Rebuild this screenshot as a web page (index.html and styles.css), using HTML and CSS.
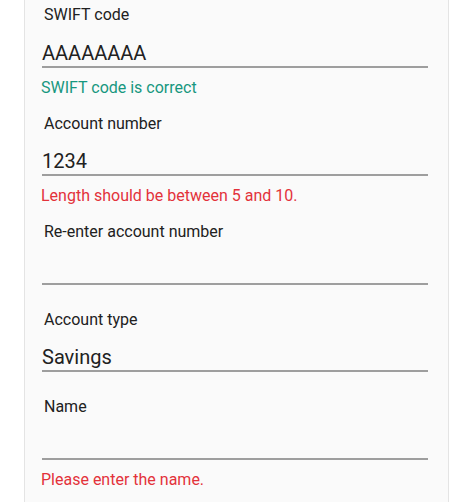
FILE: index.html
```html
<!DOCTYPE html>
<html lang="en">
<head>
<meta charset="utf-8">
<title>Bank details form</title>
<link rel="stylesheet" href="styles.css">
</head>
<body>
<div class="page">
  <form class="card">
    <div class="field field--helper">
      <div class="label">SWIFT code</div>
      <div class="value">AAAAAAAA</div>
      <div class="line"></div>
      <div class="helper helper--ok">SWIFT code is correct</div>
    </div>
    <div class="field field--helper">
      <div class="label">Account number</div>
      <div class="value">1234</div>
      <div class="line"></div>
      <div class="helper helper--error">Length should be between 5 and 10.</div>
    </div>
    <div class="field">
      <div class="label">Re-enter account number</div>
      <div class="value"></div>
      <div class="line"></div>
    </div>
    <div class="field">
      <div class="label">Account type</div>
      <div class="value">Savings</div>
      <div class="line"></div>
    </div>
    <div class="field field--helper">
      <div class="label">Name</div>
      <div class="value"></div>
      <div class="line"></div>
      <div class="helper helper--error">Please enter the name.</div>
    </div>
  </form>
</div>
</body>
</html>
```
FILE: styles.css
```css
html, body {
  margin: 0;
  padding: 0;
  background: #ffffff;
  height: 100%;
  overflow: hidden;
}

.page {
  display: flex;
  padding-left: 24px;
  height: 100%;
}

.card {
  width: 425px;
  box-sizing: border-box;
  background: #fafafa;
  border-left: 1px solid #e4e4e4;
  border-right: 1px solid #e4e4e4;
  padding: 5px 20px 0 17px;
  font-family: Roboto, "Liberation Sans", sans-serif;
  color: #212121;
  display: flex;
  flex-direction: column;
}

.field {
  display: flex;
  flex-direction: column;
  margin-bottom: 25px;
}

.field--helper {
  margin-bottom: 16px;
}

.label {
  font-size: 16px;
  line-height: 20px;
  height: 20px;
  padding-left: 2px;
  margin-bottom: 14.5px;
}

.value {
  font-size: 20px;
  line-height: 26px;
  height: 26px;
}

.line {
  height: 2px;
  background: #9e9e9e;
}

.helper {
  font-size: 16px;
  line-height: 20px;
  margin-top: 10px;
  margin-left: -1px;
}

.helper--ok {
  color: #17977f;
}

.helper--error {
  color: #e3323a;
}
```
